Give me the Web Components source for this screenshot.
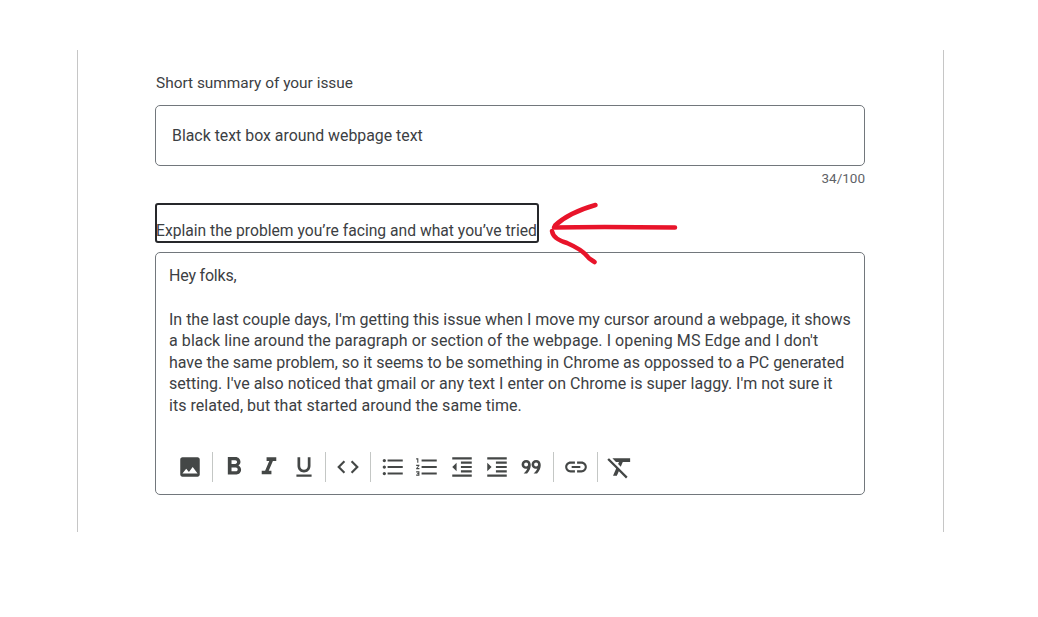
<!DOCTYPE html>
<html lang="en"><head><meta charset="utf-8"><title>Issue form</title>
<style>
html,body{margin:0;padding:0;background:#fff;height:617px;overflow:hidden}
body{font-family:Roboto,"Liberation Sans",sans-serif;color:#3c4043}
</style></head>
<body>
<support-form>
  <form-label>Short summary of your issue</form-label>
  <text-input>Black text box around webpage text</text-input>
  <char-counter>34/100</char-counter>
  <form-label outlined>Explain the problem you’re facing and what you’ve tried</form-label>
  <rich-editor>
    <p style="letter-spacing:-.2px">Hey folks,</p>
    <p><span style="letter-spacing:-.01px">In the last couple days, I'm getting this issue when I move my cursor around a webpage, it shows</span><br><span style="letter-spacing:.08px">a black line around the paragraph or section of the webpage. I opening MS Edge and I don't</span><br><span style="letter-spacing:-.02px">have the same problem, so it seems to be something in Chrome as oppossed to a PC generated</span><br><span style="letter-spacing:.02px">setting. I've also noticed that gmail or any text I enter on Chrome is super laggy. I'm not sure it</span><br><span style="letter-spacing:.04px">its related, but that started around the same time.</span></p>
    <tool-icon slot="tools" name="image"></tool-icon><tool-sep slot="tools"></tool-sep>
    <tool-icon slot="tools" name="bold" scale="1.14"></tool-icon><tool-icon slot="tools" name="italic" scale="1.12"></tool-icon><tool-icon slot="tools" name="underline"></tool-icon><tool-sep slot="tools"></tool-sep>
    <tool-icon slot="tools" name="code"></tool-icon><tool-sep slot="tools"></tool-sep>
    <tool-icon slot="tools" name="bullets"></tool-icon><tool-icon slot="tools" name="numbers"></tool-icon><tool-icon slot="tools" name="outdent"></tool-icon><tool-icon slot="tools" name="indent"></tool-icon><tool-icon slot="tools" name="quote"></tool-icon><tool-sep slot="tools"></tool-sep>
    <tool-icon slot="tools" name="link"></tool-icon><tool-sep slot="tools"></tool-sep>
    <tool-icon slot="tools" name="clear" scale="1.17"></tool-icon>
  </rich-editor>
  <red-arrow></red-arrow>
</support-form>
<script>
function def(name, html, init){
  customElements.define(name, class extends HTMLElement{
    constructor(){super();this.attachShadow({mode:'open'}).innerHTML=html;}
    connectedCallback(){if(init)init(this);}
  });
}
def('support-form',`<style>
:host{display:block;position:relative;box-sizing:border-box;width:867px;height:482px;margin:50px 0 0 77px;padding:22px 78px 0 78px;border-left:1px solid #c6c6c6;border-right:1px solid #c6c6c6;}
</style><slot></slot>`);
def('form-label',`<style>
:host{display:block;font-size:15.42px;line-height:22px;height:22px;margin-bottom:11px;color:#3c4043;white-space:nowrap}
:host([outlined]){box-sizing:border-box;font-size:15.66px;width:384px;height:40px;margin:0 0 9px -1px;border:2px solid #26282b;border-radius:3px;display:flex;align-items:flex-end;line-height:20px;text-indent:-1px}
</style><slot></slot>`);
def('text-input',`<style>
:host{display:flex;align-items:center;box-sizing:border-box;height:61px;margin-left:-1px;padding:0 16px;border:1px solid #72777c;border-radius:5px;font-size:15.87px;color:#3c4043}
</style><slot></slot>`);
def('char-counter',`<style>
:host{display:block;text-align:right;font-size:13.5px;line-height:18px;margin-top:3px;height:34px;color:#5f6368}
</style><slot></slot>`);
def('rich-editor',`<style>
:host{display:flex;flex-direction:column;box-sizing:border-box;height:243px;margin-left:-1px;padding:12.4px 12px 0 13px;border:1px solid #72777c;border-radius:5px;font-size:16px;line-height:21.6px;color:#3c4043}
::slotted(p){margin:0 0 21.7px 0;white-space:nowrap}
.bar{display:flex;align-items:center;gap:8.7px;margin-top:13.2px;margin-left:8px;height:30px}
</style><slot></slot><div class="bar"><slot name="tools"></slot></div>`);
const paths={
image:'M21 19V5c0-1.1-.9-2-2-2H5c-1.1 0-2 .9-2 2v14c0 1.1.9 2 2 2h14c1.1 0 2-.9 2-2zM8.5 13.5l2.5 3.01L14.5 12l4.5 6H5l3.5-4.5z',
bold:'M15.6 10.79c.97-.67 1.65-1.77 1.65-2.79 0-2.26-1.75-4-4-4H7v14h7.04c2.09 0 3.71-1.7 3.71-3.79 0-1.52-.86-2.82-2.15-3.42zM10 6.5h3c.83 0 1.5.67 1.5 1.5s-.67 1.5-1.5 1.5h-3v-3zm3.5 9H10v-3h3.5c.83 0 1.5.67 1.5 1.5s-.67 1.5-1.5 1.5z',
italic:'M10 4v3h2.21l-3.42 8H6v3h8v-3h-2.21l3.42-8H18V4z',
underline:'M12 17c3.31 0 6-2.69 6-6V3h-2.5v8c0 1.93-1.57 3.5-3.5 3.5S8.5 12.93 8.5 11V3H6v8c0 3.31 2.69 6 6 6zm-7 2v2h14v-2H5z',
code:'M9.4 16.6L4.8 12l4.6-4.6L8 6l-6 6 6 6 1.4-1.4zm5.2 0l4.6-4.6-4.6-4.6L16 6l6 6-6 6-1.4-1.4z',
bullets:'M4 10.5c-.83 0-1.5.67-1.5 1.5s.67 1.5 1.5 1.5 1.5-.67 1.5-1.5-.67-1.5-1.5-1.5zm0-6c-.83 0-1.5.67-1.5 1.5S3.17 7.5 4 7.5 5.5 6.83 5.5 6 4.83 4.5 4 4.5zm0 12c-.83 0-1.5.68-1.5 1.5s.68 1.5 1.5 1.5 1.5-.68 1.5-1.5-.67-1.5-1.5-1.5zM7 19h14v-2H7v2zm0-6h14v-2H7v2zm0-8v2h14V5H7z',
numbers:'M2 17h2v.5H3v1h1v.5H2v1h3v-4H2v1zm1-9h1V4H2v1h1v3zm-1 3h1.8L2 13.1v.9h3v-1H3.2L5 10.9V10H2v1zm5-6v2h14V5H7zm0 14h14v-2H7v2zm0-6h14v-2H7v2z',
outdent:'M11 17h10v-2H11v2zm-8-5l4 4V8l-4 4zm0 9h18v-2H3v2zM3 3v2h18V3H3zm8 6h10V7H11v2zm0 4h10v-2H11v2z',
indent:'M3 21h18v-2H3v2zM3 8v8l4-4-4-4zm8 9h10v-2H11v2zM3 3v2h18V3H3zm8 6h10V7H11v2zm0 4h10v-2H11v2z',
quote:'M7.5 5.5a4.2 4.2 0 0 0-4.2 4.2c0 2.3 1.8 4 4 4 .5 0 1-.1 1.3-.3-.5 1.5-1.7 3-3.4 4.6h3.2c2.2-2.2 3.4-4.8 3.4-7.8 0-3-1.7-4.7-4.3-4.7zm0 2.4c1.1 0 1.8.8 1.8 1.9s-.8 1.8-1.8 1.8-1.8-.8-1.8-1.8.7-1.9 1.8-1.9zM16.7 5.5a4.2 4.2 0 0 0-4.2 4.2c0 2.3 1.8 4 4 4 .5 0 1-.1 1.3-.3-.5 1.5-1.7 3-3.4 4.6h3.2c2.2-2.2 3.4-4.8 3.4-7.8 0-3-1.7-4.7-4.3-4.7zm0 2.4c1.1 0 1.8.8 1.8 1.9s-.8 1.8-1.8 1.8-1.8-.8-1.8-1.8.7-1.9 1.8-1.9z',
link:'M3.9 12c0-1.71 1.39-3.1 3.1-3.1h4V7H7c-2.76 0-5 2.24-5 5s2.24 5 5 5h4v-1.9H7c-1.71 0-3.1-1.39-3.1-3.1zM8 13h8v-2H8v2zm9-6h-4v1.9h4c1.71 0 3.1 1.39 3.1 3.1s-1.39 3.1-3.1 3.1h-4V17h4c2.76 0 5-2.24 5-5s-2.24-5-5-5z',
clear:'M3.27 5L2 6.27l6.97 6.97L6.5 19h3l1.57-3.66L16.73 21 18 19.73 3.55 5.27 3.27 5zM6 5v.18L8.82 8h2.4l-.72 1.68 2.1 2.1L14.21 8H20V5H6z'
};
def('tool-icon',`<style>
:host{display:block;width:26px;height:26px;flex:none}
svg{display:block;width:26px;height:26px;fill:#444746}
</style><svg viewBox="0 0 24 24" aria-hidden="true"><path></path></svg>`,el=>{
  el.shadowRoot.querySelector('path').setAttribute('d',paths[el.getAttribute('name')]);
  const s=el.getAttribute('scale');
  if(s)el.shadowRoot.querySelector('svg').style.transform='scale('+s+')';
});
def('tool-sep',`<style>:host{display:block;width:1px;height:30px;flex:none;background:#c4c7c5}</style>`);
def('red-arrow',`<style>
:host{display:block;position:absolute;left:0;top:0;width:100%;height:100%;pointer-events:none}
svg{position:absolute;left:0;top:0;overflow:visible}
</style><svg width="867" height="482" viewBox="78 50 867 482" fill="none" stroke="#e8142a" stroke-linecap="round" stroke-linejoin="round" stroke-width="4.500">
<path d="M595.500 205C578 210 563 218 555 225.500"/>
<path d="M554 227.500C590 226.500 640 227 675 227.500"/>
<path d="M552 231C553 238 560 241 567 243C576 247 583 251 587 256C589 259 592 260 594.500 262"/>
</svg>`);
</script>
</body></html>
